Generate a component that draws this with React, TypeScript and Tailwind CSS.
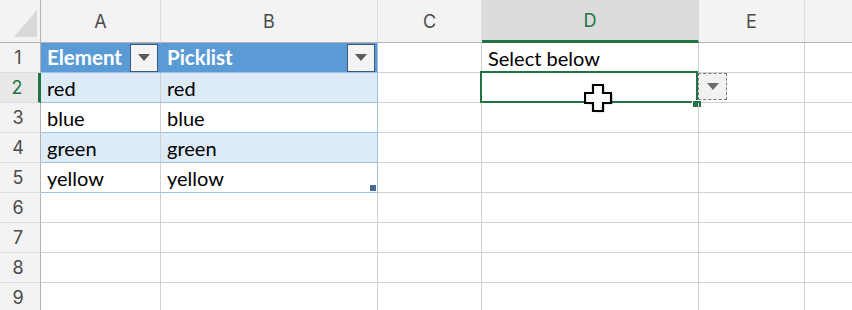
import React from "react";

const FONT_CELL = { fontFamily: "Lato, 'Open Sans', sans-serif" };
const FONT_HEAD = { fontFamily: "Inter, 'Liberation Sans', sans-serif" };

function FilterButton() {
  return (
    <div className="w-[28px] h-[28px] border border-[#3f5877] bg-[#f4f4f4] flex items-center justify-center">
      <svg width="12" height="8" viewBox="0 0 12 8">
        <polygon points="0,0 12,0 6,7" fill="#5a5a5a" />
      </svg>
    </div>
  );
}

function Cursor() {
  const d = "M9 1 H19 V9 H27 V19 H19 V27 H9 V19 H1 V9 H9 Z";
  return (
    <svg width="32" height="32" viewBox="0 0 32 32">
      <path d={d} transform="translate(1.5,1.5)" fill="rgba(0,0,0,0.18)" />
      <path d={d} fill="#ffffff" stroke="#000000" strokeWidth="2.2" strokeLinejoin="miter" />
    </svg>
  );
}

const widths = ["w-[120px]", "w-[217px]", "w-[104px]", "w-[217px]", "w-[106px]"];
const letters = ["A", "B", "C", "D", "E"];

const data: Record<number, [string, string]> = {
  2: ["red", "red"],
  3: ["blue", "blue"],
  4: ["green", "green"],
  5: ["yellow", "yellow"],
};

export default function App() {
  const rows = [1, 2, 3, 4, 5, 6, 7, 8, 9];
  return (
    <div className="relative w-[852px] h-[310px] overflow-hidden bg-white text-black">
      {/* Column header row */}
      <div className="flex h-[43px]" style={FONT_HEAD}>
        <div className="relative w-[41px] shrink-0 bg-[#f3f3f3] border-r border-b border-[#b3b3b3]">
          <svg className="absolute left-[14px] top-[10px]" width="23" height="27" viewBox="0 0 23 27">
            <polygon points="23,0 23,27 0,27" fill="#d9d9d9" />
          </svg>
        </div>
        {letters.map((l, i) => (
          <div
            key={l}
            className={
              l === "D"
                ? `${widths[i]} shrink-0 bg-[#dcdcdc] border-r border-r-[#d8d8d8] border-b-[3px] border-b-[#217346] flex items-center justify-center text-[18px] text-[#217346]`
                : `${widths[i]} shrink-0 bg-[#f3f3f3] border-r border-r-[#dcdcdc] border-b border-b-[#b3b3b3] flex items-center justify-center text-[18px] text-[#4a4a4a]`
            }
          >
            {l}
          </div>
        ))}
        <div className="flex-1 bg-[#f3f3f3] border-b border-b-[#b3b3b3]" />
      </div>

      {rows.map((r) => {
        const isHeader = r === 1;
        const inTable = r >= 2 && r <= 5;
        const banded = r === 2 || r === 4;
        const bg = isHeader ? "bg-[#5b9bd5]" : banded ? "bg-[#ddebf7]" : "bg-white";
        const bottomA = isHeader || inTable ? "border-b-[#9bc2e6]" : "border-b-[#d0d0d0]";
        return (
          <div key={r} className="flex h-[30px]" style={FONT_CELL}>
            {/* Row header */}
            <div
              className={
                r === 2
                  ? "w-[41px] shrink-0 bg-[#e8e8e8] border-r-[3px] border-r-[#217346] border-b border-b-[#dcdcdc] flex items-center justify-center text-[18px] text-[#217346]"
                  : "w-[41px] shrink-0 bg-[#f3f3f3] border-r border-r-[#b3b3b3] border-b border-b-[#dcdcdc] flex items-center justify-center text-[18px] text-[#4a4a4a]"
              }
              style={FONT_HEAD}
            >
              <span className="pr-[4px]">{r}</span>
            </div>

            {/* Column A */}
            <div
              className={`w-[120px] shrink-0 ${bg} border-r ${
                isHeader ? "border-r-[#5b9bd5]" : "border-r-[#d0d0d0]"
              } border-b ${bottomA} flex items-center pl-[6px] pr-[2px] text-[20px]`}
            >
              {isHeader ? (
                <>
                  <span className="flex-1 font-bold text-white text-[20.5px]">Element</span>
                  <FilterButton />
                </>
              ) : (
                <span>{data[r]?.[0] ?? ""}</span>
              )}
            </div>

            {/* Column B */}
            <div
              className={`relative w-[217px] shrink-0 ${bg} border-r ${
                isHeader || inTable ? "border-r-[#9bc2e6]" : "border-r-[#d0d0d0]"
              } border-b ${bottomA} flex items-center pl-[6px] pr-[2px] text-[20px]`}
            >
              {isHeader ? (
                <>
                  <span className="flex-1 font-bold text-white text-[20.5px]">Picklist</span>
                  <FilterButton />
                </>
              ) : (
                <span>{data[r]?.[1] ?? ""}</span>
              )}
              {r === 5 && (
                <div className="absolute right-[1px] bottom-[1px] w-[6px] h-[6px] bg-[#466a92]" />
              )}
            </div>

            {/* Column C */}
            <div className="w-[104px] shrink-0 border-r border-r-[#d0d0d0] border-b border-b-[#d0d0d0]" />

            {/* Column D */}
            <div className="relative w-[217px] shrink-0 border-r border-r-[#d0d0d0] border-b border-b-[#d0d0d0] flex items-center pl-[6px] text-[20px]">
              {r === 1 && <span>Select below</span>}
              {r === 2 && (
                <>
                  <div className="absolute left-[-2px] top-[-2px] w-[218px] h-[32px] border-2 border-[#217346]" />
                  <div className="absolute left-[216px] top-0 w-[29px] h-[27px] bg-[#f2f2f2] border border-dashed border-[#7a7a7a] flex items-center justify-center">
                    <svg width="12" height="8" viewBox="0 0 12 8">
                      <polygon points="0,0 12,0 6,7" fill="#6b6b6b" />
                    </svg>
                  </div>
                  <div className="absolute left-[210px] top-[27px] w-[9px] h-[7px] bg-[#217346] border-l border-t border-white" />
                </>
              )}
            </div>

            {/* Column E */}
            <div className="w-[106px] shrink-0 border-r border-r-[#d0d0d0] border-b border-b-[#d0d0d0]" />

            {/* Column F */}
            <div className="flex-1 border-b border-b-[#d0d0d0]" />
          </div>
        );
      })}

      {/* Mouse cursor */}
      <div className="absolute left-[584px] top-[84px]">
        <Cursor />
      </div>
    </div>
  );
}
